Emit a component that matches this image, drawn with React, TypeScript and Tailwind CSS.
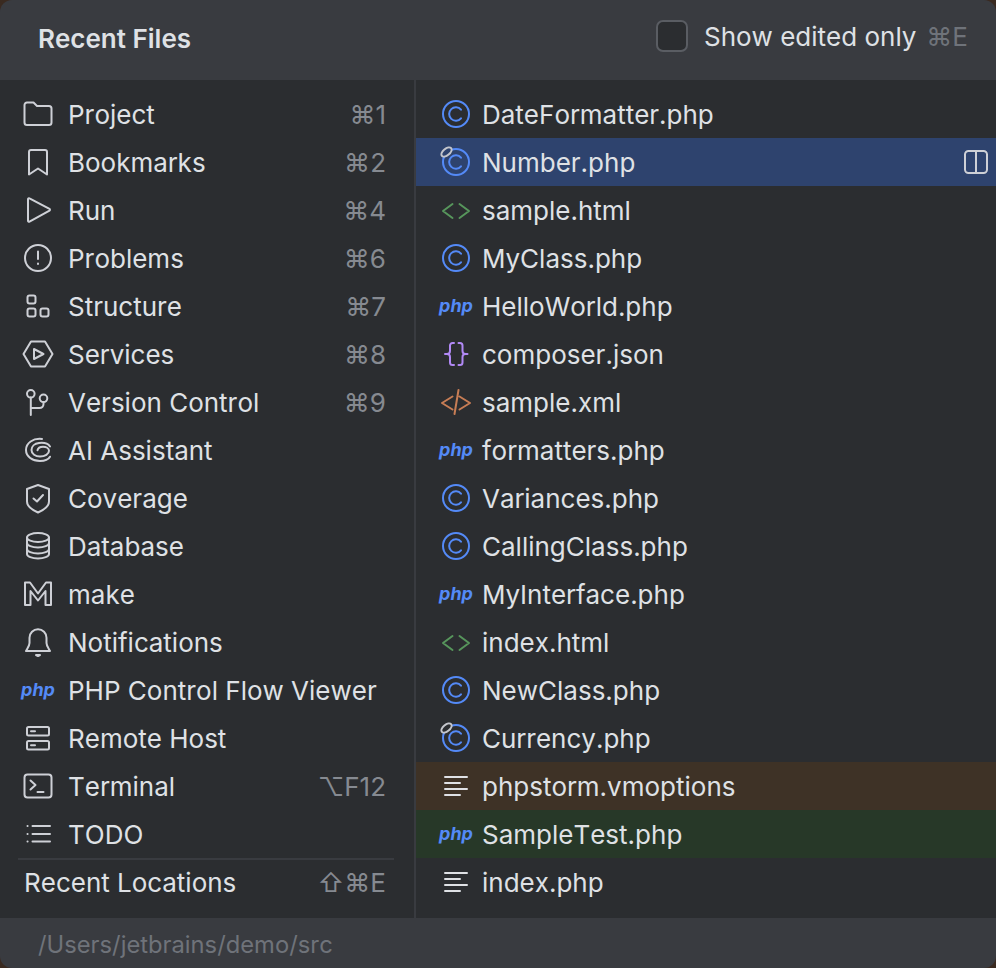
import type { ReactNode } from "react";

const ui = "#ced0d6";
const blue = "#548af7";

function Ico({ children, color = ui }: { children: ReactNode; color?: string }) {
  return (
    <svg width="32" height="32" viewBox="0 0 32 32" fill="none" stroke={color} strokeWidth="2" strokeLinecap="round" strokeLinejoin="round" className="shrink-0">
      {children}
    </svg>
  );
}

function Php() {
  return (
    <span className="flex h-8 w-8 shrink-0 items-center justify-center text-[18px] font-bold italic leading-none text-[#548af7]">
      php
    </span>
  );
}

const Folder = () => <Ico><path d="M2.5 7a2.5 2.5 0 0 1 2.5-2.5h6.500l3.500 3.500h12a2.500 2.500 0 0 1 2.500 2.500V24.500a2.500 2.500 0 0 1-2.500 2.500H5a2.500 2.500 0 0 1-2.500-2.500z" /></Ico>;
const Bookmark = () => <Ico><path d="M7 6a2 2 0 0 1 2-2h14a2 2 0 0 1 2 2v22.500l-9-6-9 6z" /></Ico>;
const Run = () => <Ico><path d="M6 5.200v21.600a1 1 0 0 0 1.500.900L27.500 16.600a1 1 0 0 0 0-1.700L7.500 4.300A1 1 0 0 0 6 5.200z" /></Ico>;
const Problems = () => <Ico><circle cx="16" cy="16" r="13" /><path d="M16 9.500v7.500M16 21.500v.5" /></Ico>;
const Structure = () => <Ico><rect x="5.500" y="5.500" width="8" height="8" rx="2" /><rect x="5.500" y="18.500" width="8" height="8" rx="2" /><rect x="18.500" y="18.500" width="8" height="8" rx="2" /></Ico>;
const Services = () => <Ico><path d="M9 3.500h14L30.500 16 23 28.500H9L1.500 16z" /><path d="M12 11v10l9.500-5z" /></Ico>;
const Vcs = () => <Ico><circle cx="8.800" cy="7.800" r="3.800" /><circle cx="21.500" cy="12.300" r="3.800" /><path d="M8.800 11.600V29M21.500 16.100v2a4 4 0 0 1-4 4H8.800" /></Ico>;
const Ai = () => <Ico><path d="M20 5C11 4 4 9 4 16c0 6.500 6.500 11 14 11 4.500 0 8.500-1.700 10-4.300" /><path d="M28 12.500C26 9.500 21 8.500 17 9 12.500 9.500 9.500 12.500 9.500 16c0 4 4 6.500 8.500 6.500 5 0 9-2.500 9-5.800 0-2.500-3-4-6-4-2.500 0-5 1.300-5.500 3.500" /></Ico>;
const Coverage = () => <Ico><path d="M16 3l11 4v12.500c0 4.800-6.500 9-11 11-4.500-2-11-6.200-11-11V7z" /><path d="M11.500 16.500l3.500 3 6-6.500" /></Ico>;
const Database = () => <Ico><ellipse cx="16" cy="7.500" rx="11" ry="4.500" /><path d="M5 7.500V24c0 2.500 5 4.500 11 4.500S27 26.500 27 24V7.500M5 13c0 2.500 5 4.500 11 4.500S27 15.500 27 13M5 19c0 2.500 5 4.500 11 4.500S27 21.500 27 19" /></Ico>;
const Make = () => <Ico><path d="M3 4.500h5L16 15.500 24 4.500h5V27h-5.500V13L16 22.500 8.500 13v14H3z" /></Ico>;
const Bell = () => <Ico><path d="M16 3.200a8.500 8.500 0 0 0-8.500 8.500V17c0 3-2.200 5.500-3.500 8h24c-1.300-2.500-3.500-5-3.500-8v-5.300A8.500 8.500 0 0 0 16 3.200z" /><path d="M14 29h4l-2 1z" /></Ico>;
const Remote = () => <Ico><rect x="5" y="5" width="22" height="8.500" rx="1.500" /><rect x="5" y="19" width="22" height="8.500" rx="1.500" /><path d="M9 9.300h4M9 23.300h4" /></Ico>;
const Terminal = () => <Ico><rect x="2.500" y="4.500" width="27" height="23" rx="3" /><path d="M8.500 10.500l5 4.500-5 4.500M15.500 22h6" /></Ico>;
const Todo = () => <Ico><path d="M5.500 8h.1M5.500 16h.1M5.500 23.500h.1M10.500 8H28M10.500 16H28M10.500 23.500H28" /></Ico>;

function Cls({ pinned, fill }: { pinned?: boolean; fill?: string }) {
  return (
    <Ico color={blue}>
      <circle cx="16" cy="16" r="13" />
      <path d="M21 11.700a6.700 6.700 0 1 0 0 8.600" />
      {pinned && <ellipse cx="6.500" cy="6" rx="6" ry="3.300" transform="rotate(-40 6.500 6)" stroke="#c4c6cc" fill={fill} />}
    </Ico>
  );
}
const Html = () => <Ico color="#57965c"><path d="M12.500 10L3 17l9.500 7M19.500 10L29 17l-9.500 7" /></Ico>;
const Json = () => <Ico color="#b189f5"><path d="M14 5h-1.500A2.500 2.500 0 0 0 10 7.500V13a3 3 0 0 1-3 3H5h2a3 3 0 0 1 3 3v5.500a2.500 2.500 0 0 0 2.500 2.500H14M18.500 5H20a2.500 2.500 0 0 1 2.500 2.500V13a3 3 0 0 0 3 3h2h-2a3 3 0 0 0-3 3v5.500A2.500 2.500 0 0 1 20 27h-1.500" /></Ico>;
const Xml = () => <Ico color="#c77d55"><path d="M12.500 10.500L2 17l10.500 6.500M19.500 10.500L30 17l-10.500 6.500M18.500 4l-4 24" /></Ico>;
const TextFile = () => <Ico color="#dfe1e5"><path d="M5 7h22M5 13h15M5 19h22M5 25h15" /></Ico>;

const tools: { icon: ReactNode; label: string; key?: string }[] = [
  { icon: <Folder />, label: "Project", key: "⌘1" },
  { icon: <Bookmark />, label: "Bookmarks", key: "⌘2" },
  { icon: <Run />, label: "Run", key: "⌘4" },
  { icon: <Problems />, label: "Problems", key: "⌘6" },
  { icon: <Structure />, label: "Structure", key: "⌘7" },
  { icon: <Services />, label: "Services", key: "⌘8" },
  { icon: <Vcs />, label: "Version Control", key: "⌘9" },
  { icon: <Ai />, label: "AI Assistant" },
  { icon: <Coverage />, label: "Coverage" },
  { icon: <Database />, label: "Database" },
  { icon: <Make />, label: "make" },
  { icon: <Bell />, label: "Notifications" },
  { icon: <Php />, label: "PHP Control Flow Viewer" },
  { icon: <Remote />, label: "Remote Host" },
  { icon: <Terminal />, label: "Terminal", key: "⌥F12" },
  { icon: <Todo />, label: "TODO" },
];

const files: { icon: ReactNode; name: string; bg?: string; split?: boolean }[] = [
  { icon: <Cls />, name: "DateFormatter.php" },
  { icon: <Cls pinned fill="#2e436e" />, name: "Number.php", bg: "bg-[#2e436e]", split: true },
  { icon: <Html />, name: "sample.html" },
  { icon: <Cls />, name: "MyClass.php" },
  { icon: <Php />, name: "HelloWorld.php" },
  { icon: <Json />, name: "composer.json" },
  { icon: <Xml />, name: "sample.xml" },
  { icon: <Php />, name: "formatters.php" },
  { icon: <Cls />, name: "Variances.php" },
  { icon: <Cls />, name: "CallingClass.php" },
  { icon: <Php />, name: "MyInterface.php" },
  { icon: <Html />, name: "index.html" },
  { icon: <Cls />, name: "NewClass.php" },
  { icon: <Cls pinned fill="#2b2d30" />, name: "Currency.php" },
  { icon: <TextFile />, name: "phpstorm.vmoptions", bg: "bg-[#3e3226]" },
  { icon: <Php />, name: "SampleTest.php", bg: "bg-[#273828]" },
  { icon: <TextFile />, name: "index.php" },
];

const keyFont = "font-['Inter','DejaVu_Sans',sans-serif]";

export default function App() {
  return (
    <div className="h-[968px] w-[996px] overflow-hidden bg-[#3a2a20] font-['Inter',sans-serif] text-[26px] leading-none text-[#dfe1e5] [font-kerning:none]">
      <div className="flex h-full flex-col overflow-hidden rounded-[12px] bg-[#393b40]">
        <header className="flex h-20 shrink-0 items-center justify-between pb-2 pl-[38px] pr-7">
          <h1 className="pt-1.5 text-[26px] font-semibold">Recent Files</h1>
          <div className="flex items-center">
            <span className="h-8 w-8 rounded-[7px] border-2 border-[#5a5d63] bg-[#2b2d30]" />
            <span className="ml-4 pt-0.5">Show edited only</span>
            <span className={`ml-2.5 pt-0.5 text-[#6f737a] ${keyFont}`}>⌘E</span>
          </div>
        </header>

        <main className="flex h-[838px] shrink-0 bg-[#2b2d30]">
          <section className="flex w-[414px] shrink-0 flex-col pt-2.5">
            {tools.map((t) => (
              <div key={t.label} className="flex h-12 shrink-0 items-center pl-[22px] pr-7">
                {t.icon}
                <span className="ml-3.5 flex-1 pt-0.5">{t.label}</span>
                {t.key && <span className={`pt-0.5 text-[#868a91] ${keyFont}`}>{t.key}</span>}
              </div>
            ))}
            <div className="mx-[18px] mr-5 h-0.5 shrink-0 bg-[#393b40]" />
            <div className="flex h-[46px] shrink-0 items-center pl-6 pr-7">
              <span className="flex-1">Recent Locations</span>
              <span className={`text-[#868a91] ${keyFont}`}>⇧⌘E</span>
            </div>
          </section>
          <div className="w-0.5 shrink-0 bg-[#393b40]" />
          <section className="flex min-w-0 flex-1 flex-col pt-2.5">
            {files.map((f) => (
              <div key={f.name} className={`flex h-12 shrink-0 items-center pl-6 pr-2 ${f.bg ?? ""}`}>
                {f.icon}
                <span className="ml-2.5 flex-1 pt-0.5">{f.name}</span>
                {f.split && (
                  <svg width="24" height="24" viewBox="0 0 24 24" fill="none" stroke={ui} strokeWidth="2">
                    <rect x="1" y="1" width="22" height="22" rx="3.500" />
                    <path d="M12 1v22" />
                  </svg>
                )}
              </div>
            ))}
          </section>
        </main>

        <footer className="flex h-[50px] shrink-0 items-center pl-[38px] pt-1 text-[23.75px] text-[#6f737a]">
          /Users/jetbrains/demo/src
        </footer>
      </div>
    </div>
  );
}
